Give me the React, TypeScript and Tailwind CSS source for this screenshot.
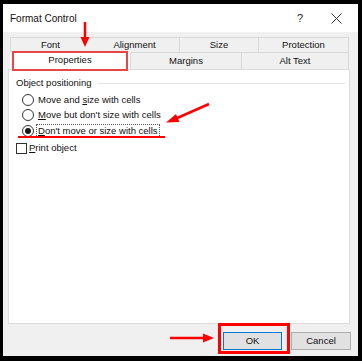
import React from 'react';

const font = { fontFamily: '"Liberation Sans", Arial, sans-serif' };

function Radio({ checked, label, under, focus }: { checked?: boolean; label: string; under: number; focus?: boolean }) {
  return (
    <div className="flex items-center h-[15.5px]">
      <div className="ml-[13px] w-[12px] h-[12px] rounded-full border border-[#333] bg-white flex items-center justify-center">
        {checked && <div className="w-[6px] h-[6px] rounded-full bg-[#1a1a1a]" />}
      </div>
      <div className={`ml-[2px] px-[1px] leading-[12px] text-[9.5px] text-[#111] border border-dotted ${focus ? 'border-[#555]' : 'border-transparent'}`}>
        {label.slice(0, under)}
        <span className="underline">{label[under]}</span>
        {label.slice(under + 1)}
      </div>
    </div>
  );
}

export default function App() {
  return (
    <div className="relative w-[362px] h-[361px] bg-black pt-[4px] pl-[3px] pr-[4px] pb-[5px]" style={font}>
      <div className="w-full h-full bg-[#f0f0f0] flex flex-col">
        {/* title bar */}
        <div className="h-[28px] bg-white flex items-center shrink-0">
          <span className="ml-[7px] text-[10px] text-[#111]">Format Control</span>
          <span className="ml-auto text-[11px] text-[#222] mr-[28px]">?</span>
          <svg width="11" height="11" viewBox="0 0 11 11" className="mr-[16px]">
            <path d="M0.5 0.5 L10.5 10.5 M10.5 0.5 L0.5 10.5" stroke="#333" strokeWidth="1" />
          </svg>
        </div>

        {/* tabs */}
        <div className="mt-[5px] ml-[7px] w-[339px] text-[9.5px] text-[#111]">
          <div className="flex h-[15px]">
            <div className="w-[80px] border-t border-l border-[#d9d9d9] flex items-center justify-center">Font</div>
            <div className="w-[89px] border-t border-[#d9d9d9] flex items-center justify-center">Alignment</div>
            <div className="w-[79px] border-t border-l border-[#d9d9d9] flex items-center justify-center">Size</div>
            <div className="w-[91px] border-t border-l border-r border-[#d9d9d9] flex items-center justify-center">Protection</div>
          </div>
          <div className="flex h-[17px]">
            <div className="relative w-[120px] bg-white flex items-center justify-center">
              Properties
              <div className="absolute left-[2px] -top-[1px] w-[116px] h-[20px] border-2 border-[#e84545]" />
            </div>
            <div className="w-[111px] border-t border-l border-[#d9d9d9] flex items-center justify-center">Margins</div>
            <div className="w-[108px] border-t border-l border-r border-[#d9d9d9] flex items-center justify-center">Alt Text</div>
          </div>
        </div>

        {/* panel */}
        <div className="ml-[5px] w-[342px] h-[255px] bg-white border border-[#dcdcdc] shrink-0 pt-[7px]">
          <div className="flex items-center h-[12px]">
            <span className="ml-[7px] text-[9.5px] text-[#111]">Object positioning</span>
            <div className="ml-[6px] flex-1 mr-[4px] h-px bg-[#e3e3e3]" />
          </div>
          <div className="mt-[3px] flex flex-col">
            <Radio label="Move and size with cells" under={9} />
            <Radio label="Move but don't size with cells" under={0} />
            <Radio label="Don't move or size with cells" under={0} checked focus />
          </div>
          <div className="flex items-center mt-[4px] h-[12px]">
            <div className="ml-[7px] w-[11px] h-[11px] border border-[#333] bg-white" />
            <span className="ml-[2px] text-[9.5px] text-[#111]">
              <span className="underline">P</span>rint object
            </span>
          </div>
        </div>

        {/* footer */}
        <div className="flex justify-end pt-[8px] pr-[7px] text-[9.5px] text-[#111]">
          <div className="relative w-[59px] h-[18px] bg-[#e1e1e1] border border-[#0078d7] flex items-center justify-center">
            OK
            <div className="absolute -left-[6px] -top-[10px] w-[72px] h-[31px] border-[3px] border-[#f00]" />
          </div>
          <div className="ml-[9px] w-[60px] h-[18px] bg-[#e1e1e1] border border-[#adadad] flex items-center justify-center">Cancel</div>
        </div>
      </div>

      {/* annotations */}
      <svg className="absolute left-0 top-0 pointer-events-none" width="362" height="361">
        <g stroke="#f00" strokeWidth="2.5" fill="#f00">
          <line x1="85" y1="22" x2="85" y2="39" />
          <polygon points="80.5,37 89.5,37 85,47" stroke="none" />
          <line x1="209" y1="104" x2="175" y2="119" />
          <polygon points="166,122.5 176,114 179.5,122" stroke="none" />
          <line x1="170" y1="338" x2="205" y2="338" />
          <polygon points="203,333.5 203,342.5 214,338" stroke="none" />
          <line x1="18" y1="137" x2="165" y2="137" strokeWidth="2" />
        </g>
      </svg>
    </div>
  );
}
